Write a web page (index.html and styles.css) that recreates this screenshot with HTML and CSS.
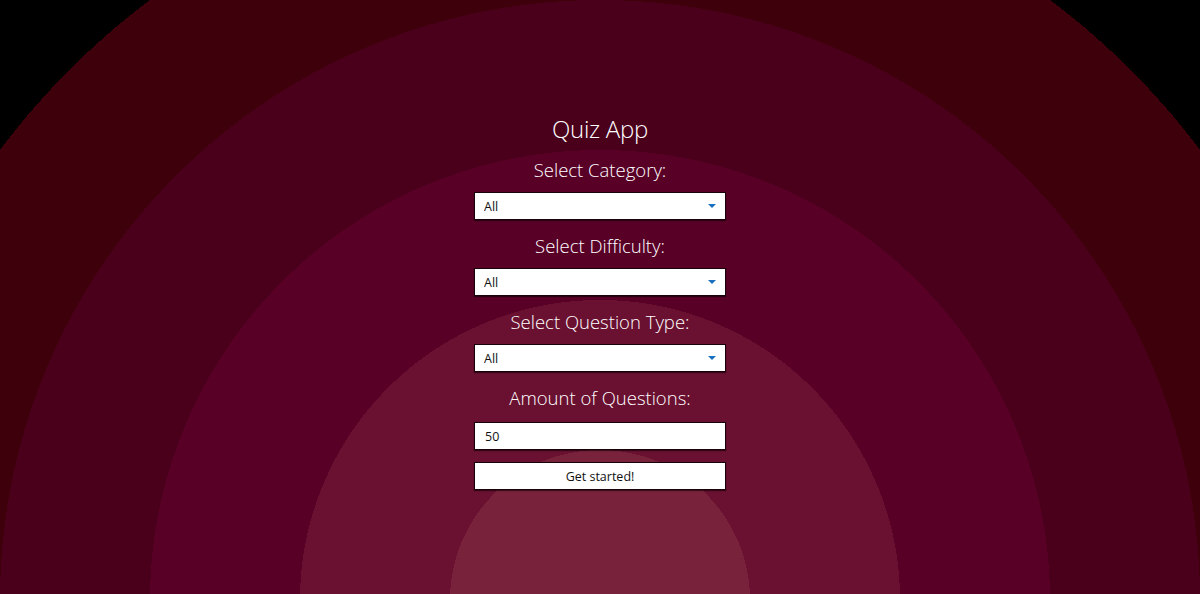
FILE: index.html
```html
<!DOCTYPE html>
<html lang="en">
<head>
    <meta charset="UTF-8">
    <meta name="viewport" content="width=device-width, initial-scale=1.0">
    <title>Quiz App</title>
    <link rel="stylesheet" href="styles.css">
</head>
<body>
    <div class="container">
        <h1>Quiz App</h1>
        <label for="category">Select Category:</label>
        <div class="select">
            <select id="category">
                <option>All</option>
            </select>
        </div>
        <label for="difficulty">Select Difficulty:</label>
        <div class="select">
            <select id="difficulty">
                <option>All</option>
                <option>Easy</option>
                <option>Medium</option>
                <option>Hard</option>
            </select>
        </div>
        <label for="type">Select Question Type:</label>
        <div class="select">
            <select id="type">
                <option>All</option>
                <option>Multiple Choice</option>
                <option>True / False</option>
            </select>
        </div>
        <label for="amount">Amount of Questions:</label>
        <input type="number" id="amount" value="50">
        <button id="start">Get started!</button>
    </div>
</body>
</html>
```

FILE: styles.css
```css
* {
    margin: 0;
    padding: 0;
    box-sizing: border-box;
}

html, body {
    height: 100%;
}

body {
    font-family: "Open Sans", "Noto Sans", sans-serif;
    color: #fff;
    /* rings growing out of the bottom centre */
    background: radial-gradient(circle at 50% 600px,
        #78233b 0 150px,
        #6a1030 150px 300px,
        #590027 300px 450px,
        #4a001b 450px 600px,
        #3e000b 600px 750px,
        #000 750px);
    overflow: hidden;
}

.container {
    width: 252px;
    margin: 0 auto;
    padding-top: 113px;
    display: flex;
    flex-direction: column;
    align-items: center;
}

h1 {
    font-size: 24px;
    font-weight: 350;
    line-height: 32px;
    letter-spacing: -0.3px;
    margin-bottom: 12px;
}

label {
    font-size: 18.5px;
    font-weight: 350;
    line-height: 24px;
    padding-top: 1px;
    margin-bottom: 10px;
}

.select {
    position: relative;
    width: 100%;
    margin-bottom: 13px;
}

/* small blue arrow on the right of each dropdown */
.select::after {
    content: "";
    position: absolute;
    right: 10px;
    top: 12px;
    border-left: 4px solid transparent;
    border-right: 4px solid transparent;
    border-top: 4px solid #1a6fbf;
    pointer-events: none;
}

select,
input,
button {
    width: 100%;
    height: 28px;
    font-family: "Open Sans", sans-serif;
    font-size: 12.5px;
    font-weight: 500;
    color: #111;
    background: #fff;
    border: 1px solid #1a0008;
    box-shadow: 0 1px 1px rgba(0, 0, 0, 0.5);
    outline: none;
}

select {
    appearance: none;
    -webkit-appearance: none;
    padding-left: 9px;
}

input {
    padding-left: 10px;
    margin-top: 2px;
    margin-bottom: 12px;
}

input::-webkit-inner-spin-button {
    -webkit-appearance: none;
}

button {
    cursor: pointer;
}

button:active {
    background: #eee;
}
```
